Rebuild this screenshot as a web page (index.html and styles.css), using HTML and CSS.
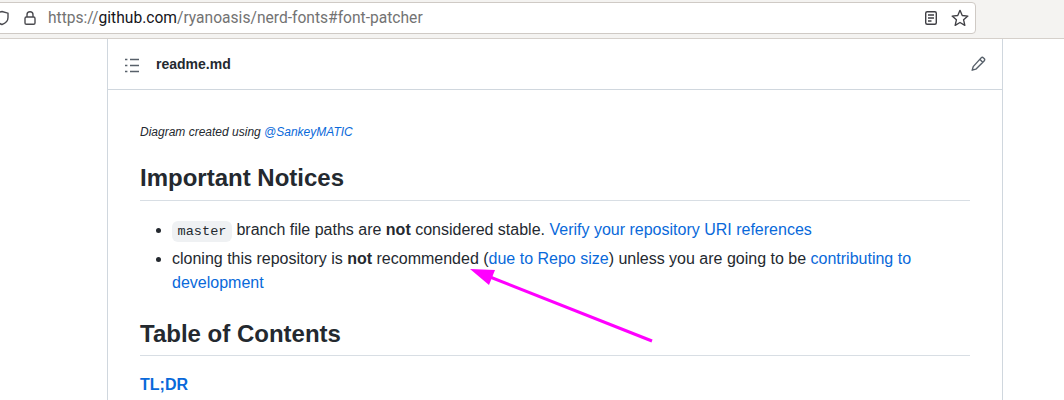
FILE: index.html
```html
<!DOCTYPE html>
<html lang="en">
<head>
  <meta charset="UTF-8">
  <title>readme.md</title>
  <link rel="stylesheet" href="styles.css">
</head>
<body>

<div class="toolbar">
  <div class="urlbar">
    <svg class="shield" width="16" height="16" viewBox="0 0 16 16"><path d="M8 1.5 14 3.2v4.3c0 3.4-2.6 5.8-6 7-3.4-1.2-6-3.6-6-7V3.2z" fill="none" stroke="#4a4a4f" stroke-width="1.4"/></svg>
    <svg class="lock" width="16" height="16" viewBox="0 0 16 16"><path d="M5 7V4.8a3 3 0 0 1 6 0V7" fill="none" stroke="#4a4a4f" stroke-width="1.4"/><rect x="3" y="7" width="10" height="7.3" rx="1.4" fill="none" stroke="#4a4a4f" stroke-width="1.4"/></svg>
    <div class="url">https://<b>github.com</b>/ryanoasis/nerd-fonts#font-patcher</div>
    <svg class="reader" width="16" height="16" viewBox="0 0 16 16"><rect x="2.7" y="1.700" width="10.600" height="12.600" rx="1.500" fill="none" stroke="#3f3f44" stroke-width="1.4"/><path d="M5 5h6M5 8h6M5 11h3.500" stroke="#3f3f44" stroke-width="1.3"/></svg>
    <svg class="star" width="18" height="18" viewBox="0 0 16 16"><path d="M8 1.200 10 5.800l5 .5-3.800 3.300 1.100 4.900L8 12l-4.300 2.500 1.100-4.900L1 6.300l5-.5z" fill="none" stroke="#3f3f44" stroke-width="1.2" stroke-linejoin="round"/></svg>
  </div>
</div>

<div class="page">
  <div class="readme">
    <div class="readme-head">
      <svg class="toc" width="16" height="16" viewBox="0 0 16 16"><path d="M6 2.500h9M6 8.500h9M6 14.500h9" stroke="#57606a" stroke-width="1.300"/><path d="M1 2.500h2.400M1 8.500h2.400M1 14.500h2.400" stroke="#57606a" stroke-width="1.300"/></svg>
      <span class="filename">readme.md</span>
      <svg class="pencil" width="16" height="16" viewBox="0 0 16 16"><path d="M11.100 1.900a1.700 1.700 0 0 1 2.400 0l.6.6a1.700 1.700 0 0 1 0 2.400l-8.300 8.300-3.600 1 1-3.600zM9.800 3.300l2.900 2.900" fill="none" stroke="#57606a" stroke-width="1.400" stroke-linejoin="round"/></svg>
    </div>
    <div class="readme-body">
      <p class="caption"><em>Diagram created using <a href="#">@SankeyMATIC</a></em></p>
      <h2 class="notices">Important Notices</h2>
      <ul>
        <li><code>master</code> branch file paths are <b>not</b> considered stable. <a href="#">Verify your repository URI references</a></li>
        <li>cloning this repository is <b>not</b> recommended (<a href="#">due to Repo size</a>) unless you are going to be <a href="#">contributing to development</a></li>
      </ul>
      <h2 class="contents">Table of Contents</h2>
      <h3><a href="#">TL;DR</a></h3>
    </div>
  </div>
</div>

<svg class="arrow" width="1064" height="400" viewBox="0 0 1064 400">
  <path d="M652 341 485 275" stroke="#ff00ff" stroke-width="3"/>
  <path d="M470 269 495 270 489 285z" fill="#ff00ff"/>
</svg>

</body>
</html>
```

FILE: styles.css
```css
html, body {
  margin: 0;
  padding: 0;
  height: 400px;
  overflow: hidden;
}
body {
  font-family: "Liberation Sans", Arial, sans-serif;
  font-size: 16px;
  color: #24292f;
  background: #fff;
  position: relative;
}
a {
  color: #0969da;
  text-decoration: none;
}

.toolbar {
  height: 39px;
  box-sizing: border-box;
  padding-top: 2px;
  background: #f4f3f1;
  border-bottom: 1px solid #d5d0cb;
}
.urlbar {
  width: 988px;
  height: 32px;
  margin-left: -12px;
  box-sizing: border-box;
  display: flex;
  align-items: center;
  background: #fff;
  border: 1px solid #cfcac5;
  border-radius: 4px;
}
.shield {
  margin-left: 5px;
}
.lock {
  margin-left: 12px;
}
.url {
  flex: 1;
  margin-left: 10px;
  font-family: Roboto, "Noto Sans", sans-serif;
  font-size: 15.6px;
  color: #737373;
}
.url b {
  font-weight: 400;
  color: #15141a;
}
.reader {
  margin-right: 12px;
}
.star {
  margin-right: 6px;
}

.page {
  padding: 0 61px 0 107px;
}
.readme {
  border: 1px solid #d0d7de;
  border-top: none;
  height: 361px;
  overflow: hidden;
}
.readme-head {
  height: 51px;
  box-sizing: border-box;
  padding: 0 16px;
  display: flex;
  align-items: center;
  border-bottom: 1px solid #d0d7de;
}
.toc {
  margin-top: 2px;
}
.filename {
  flex: 1;
  margin-left: 16px;
  font-size: 14px;
  font-weight: bold;
}
.readme-body {
  padding: 32px 32px 0;
}
.caption {
  margin: 0;
  font-size: 12px;
  line-height: 20px;
}
h2 {
  margin: 0;
  font-size: 24px;
  line-height: 30px;
  font-weight: bold;
  border-bottom: 1px solid #d8dee4;
}
.notices {
  margin-top: 21px;
  padding-bottom: 7px;
}
.contents {
  margin-top: 24px;
  padding-bottom: 6px;
}
ul {
  margin: 17px 0 0;
  padding-left: 32px;
}
li {
  line-height: 24px;
  margin-bottom: 5px;
}
li:last-child {
  margin-bottom: 0;
}
li + li {
  margin-top: -2px;
}
code {
  font-family: "Liberation Mono", monospace;
  font-size: 13.6px;
  background: #eff1f3;
  padding: 3px 5.5px;
  border-radius: 6px;
}
h3 {
  margin: 19px 0 0;
  font-size: 16px;
  line-height: 20px;
}

.arrow {
  position: absolute;
  left: 0;
  top: 0;
  pointer-events: none;
}
```
